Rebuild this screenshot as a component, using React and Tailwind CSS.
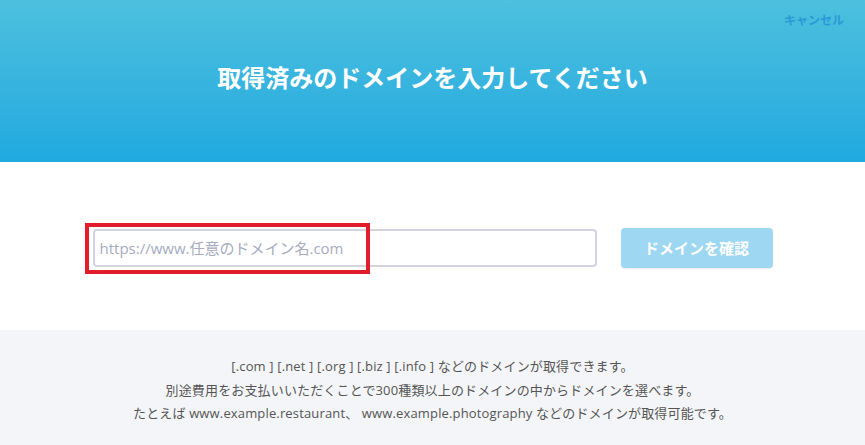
import React from "react";

export default function App() {
  return (
    <div
      className="w-[865px] h-[445px] bg-white flex flex-col overflow-hidden"
      style={{ fontFamily: '"Open Sans", "Noto Sans CJK JP", sans-serif' }}
    >
      <header className="relative h-[162px] shrink-0 bg-gradient-to-b from-[#4cc0de] to-[#1ea9df] flex justify-center">
        <button className="absolute right-[21px] top-[12px] text-[12px] font-bold text-[#2a9ad6]">
          キャンセル
        </button>
        <h1 className="mt-[60px] text-[24px] leading-[36px] font-bold text-white">
          取得済みのドメインを入力してください
        </h1>
      </header>

      <main className="h-[168px] shrink-0 flex items-center justify-center gap-6 pt-[4px]">
        <div className="relative">
          <input
            type="text"
            placeholder="https://www.任意のドメイン名.com"
            className="w-[504px] h-[38px] rounded-[4px] border-2 border-[#d3d4df] px-[5px] text-[15px] text-gray-700 placeholder:text-[#a6abc0] outline-none"
          />
          <div className="absolute left-[-8px] top-[-6px] w-[285px] h-[51px] border-[4px] border-[#e21d2b] pointer-events-none" />
        </div>
        <button className="w-[152px] h-[40px] rounded-[4px] bg-[#9dd7f2] text-white text-[15px] font-bold shadow-[0_1px_1px_rgba(0,0,0,0.08)]">
          ドメインを確認
        </button>
      </main>

      <footer className="flex-1 bg-[#f4f5f8] pt-[25px] text-center text-[13px] leading-[23.5px] tracking-[0.15px] text-[#555]">
        <p>[.com ] [.net ] [.org ] [.biz ] [.info ] などのドメインが取得できます。</p>
        <p>別途費用をお支払いいただくことで300種類以上のドメインの中からドメインを選べます。</p>
        <p>たとえば www.example.restaurant、 www.example.photography などのドメインが取得可能です。</p>
      </footer>
    </div>
  );
}
